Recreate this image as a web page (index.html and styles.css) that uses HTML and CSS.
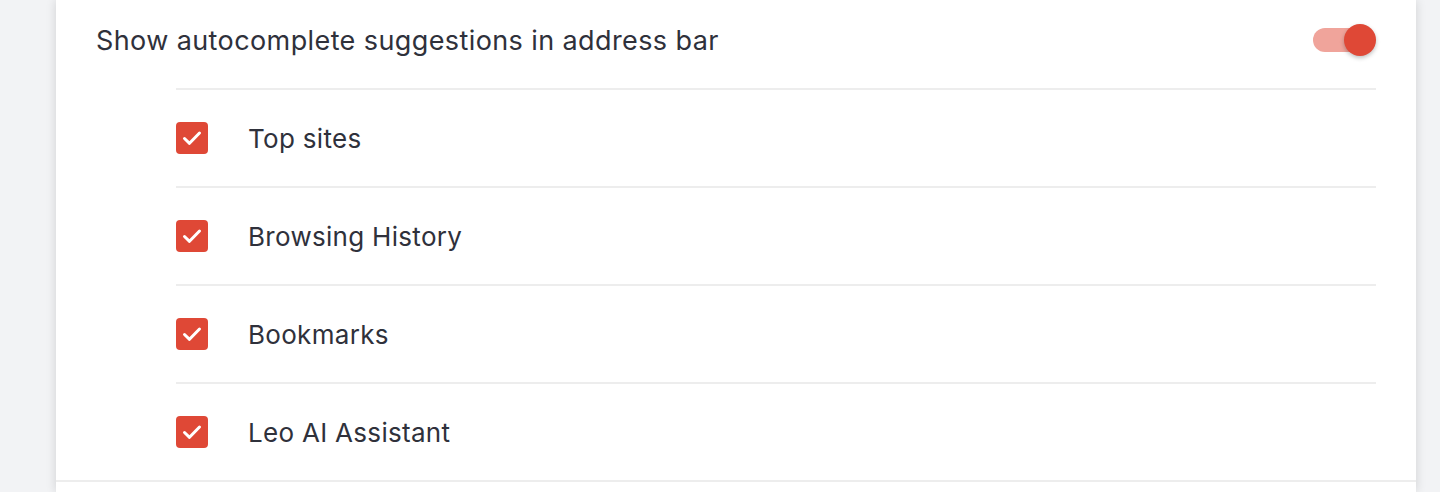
FILE: index.html
```html
<!DOCTYPE html>
<html lang="en">
<head>
<meta charset="utf-8">
<title>Autocomplete settings</title>
<link rel="stylesheet" href="styles.css">
</head>
<body>
<div class="page">
  <div class="card">
    <div class="header">
      <span class="label">Show autocomplete suggestions in address bar</span>
      <span class="toggle"><span class="track"></span><span class="knob"></span></span>
    </div>
    <div class="list">
      <div class="row">
        <span class="box"><svg viewBox="0 0 32 32" width="32" height="32"><path d="M8.5 16.5l5 4.8 10-10.3" fill="none" stroke="#fff" stroke-width="3" stroke-linecap="round" stroke-linejoin="round"/></svg></span>
        <span class="text">Top sites</span>
      </div>
      <div class="row">
        <span class="box"><svg viewBox="0 0 32 32" width="32" height="32"><path d="M8.5 16.5l5 4.8 10-10.3" fill="none" stroke="#fff" stroke-width="3" stroke-linecap="round" stroke-linejoin="round"/></svg></span>
        <span class="text">Browsing History</span>
      </div>
      <div class="row">
        <span class="box"><svg viewBox="0 0 32 32" width="32" height="32"><path d="M8.5 16.5l5 4.8 10-10.3" fill="none" stroke="#fff" stroke-width="3" stroke-linecap="round" stroke-linejoin="round"/></svg></span>
        <span class="text">Bookmarks</span>
      </div>
      <div class="row">
        <span class="box"><svg viewBox="0 0 32 32" width="32" height="32"><path d="M8.5 16.5l5 4.8 10-10.3" fill="none" stroke="#fff" stroke-width="3" stroke-linecap="round" stroke-linejoin="round"/></svg></span>
        <span class="text">Leo AI Assistant</span>
      </div>
    </div>
    <div class="footer"></div>
  </div>
</div>
</body>
</html>
```

FILE: styles.css
```css
html, body {
  margin: 0;
  padding: 0;
  height: 100%;
  overflow: hidden;
}
body {
  background: #f2f3f5;
  font-family: Inter, "Noto Sans", sans-serif;
  color: #2f313b;
}
.page {
  padding: 0 24px 0 56px;
  height: 100%;
}
.card {
  background: #fff;
  height: 100%;
  box-shadow: 0 0 10px rgba(0, 0, 0, 0.14);
}
.header {
  height: 80px;
  padding: 0 40px;
  display: flex;
  align-items: center;
  justify-content: space-between;
}
.label {
  font-size: 27px;
  letter-spacing: 0.4px;
}
.toggle {
  position: relative;
  width: 63px;
  height: 32px;
  display: block;
}
.track {
  position: absolute;
  left: 0;
  top: 4px;
  width: 58px;
  height: 24px;
  border-radius: 12px;
  background: #f0a49b;
}
.knob {
  position: absolute;
  right: 0;
  top: 0;
  width: 32px;
  height: 32px;
  border-radius: 50%;
  background: #df4836;
  box-shadow: 0 2px 4px rgba(0, 0, 0, 0.25);
}
.list {
  margin: 8px 40px 0 120px;
}
.row {
  border-top: 2px solid #ededed;
  height: 96px;
  display: flex;
  align-items: center;
  gap: 40px;
}
.box {
  width: 32px;
  height: 32px;
  border-radius: 4px;
  background: #df4836;
  display: block;
}
.box svg {
  display: block;
}
.text {
  font-size: 26px;
  letter-spacing: 0.3px;
}
.footer {
  border-top: 2px solid #ededed;
}
```
